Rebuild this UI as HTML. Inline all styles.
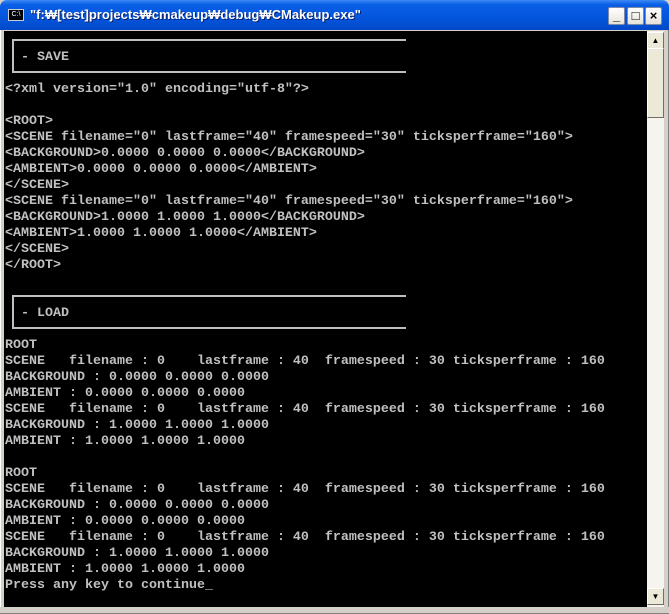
<!DOCTYPE html>
<html><head><meta charset="utf-8"><style>
*{margin:0;padding:0;box-sizing:border-box}
body{width:669px;height:614px;overflow:hidden;background:#d4d0c8;position:relative;font-family:"Liberation Sans","Noto Sans CJK KR",sans-serif}
#title{position:absolute;left:0;top:0;width:669px;height:30px;background:linear-gradient(#3d8bf5 0%,#0a5fe6 15%,#0355dc 60%,#0248c8 100%);border-radius:7px 7px 0 0}
#title .t{position:absolute;left:30px;top:7px;color:#fff;font-weight:bold;font-size:13px;text-shadow:1px 1px #0a1f6b}
#ico{position:absolute;left:8px;top:9px;width:16px;height:12px;background:#000;border:1px solid #ccc;color:#fff;font-size:7px;line-height:10px;text-align:center}
.btn{position:absolute;top:7px;width:17px;height:18px;background:linear-gradient(#fff,#e6e3d8);border:1px solid #7f8aa5;border-radius:2px;font-weight:bold;font-size:13px;text-align:center;line-height:16px;color:#000}
#frameL{position:absolute;left:0;top:30px;width:4px;height:584px;background:#d4d0c8;border-left:1px solid #fff}
#frameR{position:absolute;right:0;top:30px;width:4px;height:584px;background:#d4d0c8;border-right:1px solid #808080}
#con{position:absolute;left:4px;top:31px;width:643px;height:576px;background:#000}
#sb{position:absolute;left:647px;top:31px;width:17px;height:576px;background:#f5f4ee}
.sbb{position:absolute;left:0;width:17px;height:17px;background:#ece9d8;border:1px solid;border-color:#fff #716f64 #716f64 #fff;font-size:8px;text-align:center;line-height:15px}
pre{position:absolute;left:5px;top:34px;font-family:"Liberation Mono",monospace;font-size:13.33px;line-height:16px;color:#c0c0c0;font-weight:bold;letter-spacing:0}
.box{position:absolute;left:12px;width:394px;height:34px;border:2px solid #c0c0c0;border-right:none}
#bottom{position:absolute;left:0;top:607px;width:669px;height:7px;background:#d4d0c8;border-bottom:1px solid #808080}
</style></head><body>
<div id="title"><div id="ico">C:\</div><div class="t">"f:₩[test]projects₩cmakeup₩debug₩CMakeup.exe"</div>
<div class="btn" style="left:608px">_</div><div class="btn" style="left:627px">□</div><div class="btn" style="left:645px">×</div></div>
<div id="frameL"></div><div id="frameR"></div><div id="bottom"></div>
<div id="con"></div>
<div id="sb"><div class="sbb" style="top:1px">▲</div><div class="sbb" style="top:17px;height:70px"></div><div class="sbb" style="top:557px">▼</div></div>
<div class="box" style="top:39px"></div>
<div class="box" style="top:295px"></div>
<pre>

  - SAVE

&lt;?xml version="1.0" encoding="utf-8"?&gt;

&lt;ROOT&gt;
&lt;SCENE filename="0" lastframe="40" framespeed="30" ticksperframe="160"&gt;
&lt;BACKGROUND&gt;0.0000 0.0000 0.0000&lt;/BACKGROUND&gt;
&lt;AMBIENT&gt;0.0000 0.0000 0.0000&lt;/AMBIENT&gt;
&lt;/SCENE&gt;
&lt;SCENE filename="0" lastframe="40" framespeed="30" ticksperframe="160"&gt;
&lt;BACKGROUND&gt;1.0000 1.0000 1.0000&lt;/BACKGROUND&gt;
&lt;AMBIENT&gt;1.0000 1.0000 1.0000&lt;/AMBIENT&gt;
&lt;/SCENE&gt;
&lt;/ROOT&gt;


  - LOAD

ROOT
SCENE   filename : 0    lastframe : 40  framespeed : 30 ticksperframe : 160
BACKGROUND : 0.0000 0.0000 0.0000
AMBIENT : 0.0000 0.0000 0.0000
SCENE   filename : 0    lastframe : 40  framespeed : 30 ticksperframe : 160
BACKGROUND : 1.0000 1.0000 1.0000
AMBIENT : 1.0000 1.0000 1.0000

ROOT
SCENE   filename : 0    lastframe : 40  framespeed : 30 ticksperframe : 160
BACKGROUND : 0.0000 0.0000 0.0000
AMBIENT : 0.0000 0.0000 0.0000
SCENE   filename : 0    lastframe : 40  framespeed : 30 ticksperframe : 160
BACKGROUND : 1.0000 1.0000 1.0000
AMBIENT : 1.0000 1.0000 1.0000
Press any key to continue_</pre>
</body></html>
